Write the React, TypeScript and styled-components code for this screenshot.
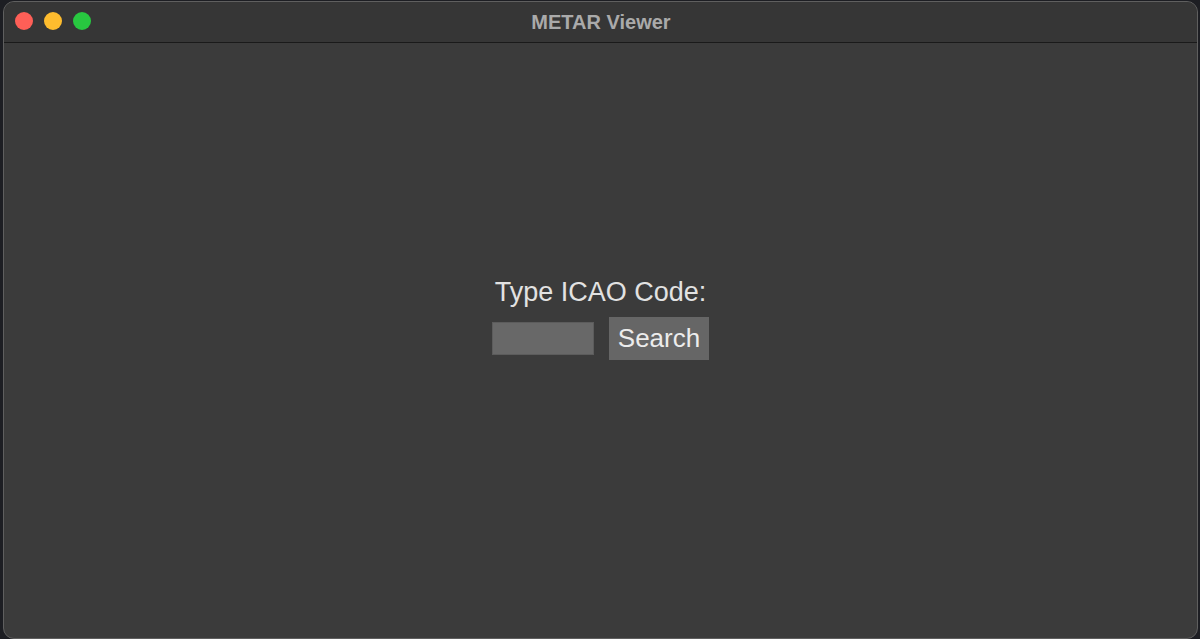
import React from 'react';
import styled, { createGlobalStyle } from 'styled-components';

const GlobalStyle = createGlobalStyle`
  html, body {
    margin: 0;
    padding: 0;
    background: #1d1e23;
  }
  #root {
    width: 1200px;
    height: 639px;
  }
`;

const App = () => {
  return (
    <StDesktop>
      <GlobalStyle />
      <StWindow>
        <StTitleBar>
          <StLights>
            <StLight color="#fe5f57" />
            <StLight color="#febc2e" />
            <StLight color="#28c840" />
          </StLights>
          <StTitle>METAR Viewer</StTitle>
        </StTitleBar>
        <StContent>
          <StLabel>Type ICAO Code:</StLabel>
          <StRow>
            <StInput type="text" />
            <StButton>Search</StButton>
          </StRow>
        </StContent>
      </StWindow>
    </StDesktop>
  );
};

export default App;

const StDesktop = styled.div`
  box-sizing: border-box;
  width: 1200px;
  height: 639px;
  padding: 1px 2px 0 3px;
  background: #1d1e23;
  font-family: 'Liberation Sans', Arial, sans-serif;
`;

const StWindow = styled.div`
  box-sizing: border-box;
  display: flex;
  flex-direction: column;
  height: 638px;
  border: 1px solid #5f5f5f;
  border-radius: 11px;
  background: #3b3b3b;
  overflow: hidden;
`;

const StTitleBar = styled.div`
  position: relative;
  display: flex;
  align-items: center;
  justify-content: center;
  height: 40px;
  background: #363636;
  border-bottom: 1px solid #1a1a1a;
  flex-shrink: 0;
`;

const StLights = styled.div`
  position: absolute;
  left: 11px;
  top: 10px;
  display: flex;
  gap: 11px;
`;

const StLight = styled.span<{ color: string }>`
  width: 18px;
  height: 18px;
  border-radius: 50%;
  background: ${({ color }) => color};
`;

const StTitle = styled.div`
  margin-left: 1px;
  font-size: 20px;
  font-weight: bold;
  color: #aaaaaa;
`;

const StContent = styled.div`
  display: flex;
  flex-direction: column;
  align-items: center;
  padding-top: 233px;
  flex: 1;
`;

const StLabel = styled.div`
  font-size: 27px;
  line-height: 32px;
  color: #e2e2e2;
`;

const StRow = styled.div`
  display: flex;
  align-items: center;
  gap: 15px;
  margin-top: 9px;
`;

const StInput = styled.input`
  box-sizing: border-box;
  width: 102px;
  height: 33px;
  padding: 0 4px;
  border: 1px solid #5c5c5c;
  background: #686868;
  color: #e8e8e8;
  font-size: 18px;
  outline: none;
`;

const StButton = styled.button`
  box-sizing: border-box;
  width: 100px;
  height: 43px;
  padding: 0;
  border: none;
  background: #666666;
  color: #ececec;
  font-family: 'Liberation Sans', Arial, sans-serif;
  font-size: 26px;
`;
